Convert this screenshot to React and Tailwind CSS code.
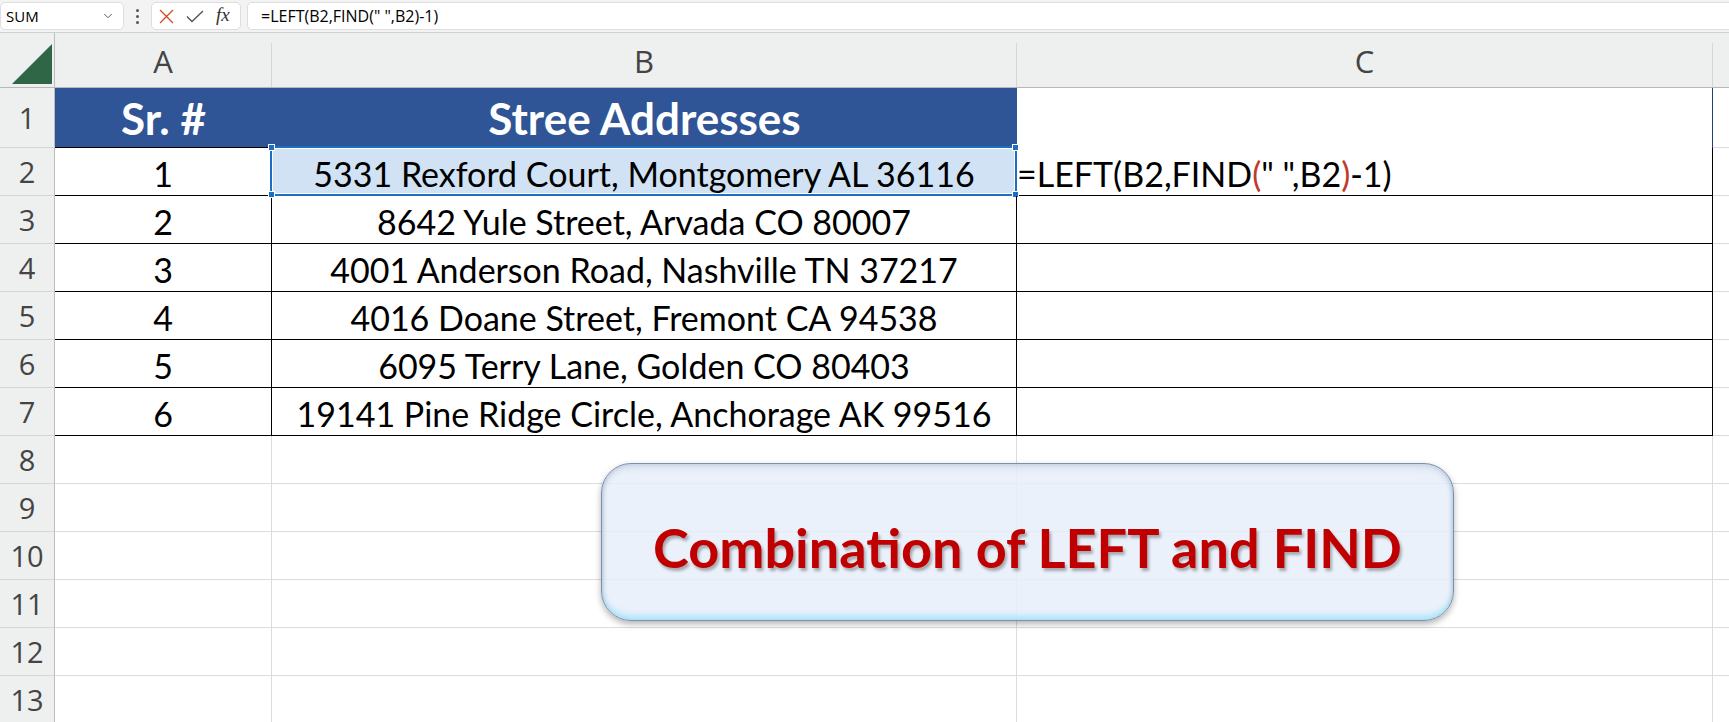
import { ChevronDown } from "lucide-react";

// Excel sheet: LEFT + FIND example
const addresses = [
  ["1", "5331 Rexford Court, Montgomery AL 36116"],
  ["2", "8642 Yule Street, Arvada CO 80007"],
  ["3", "4001 Anderson Road, Nashville TN 37217"],
  ["4", "4016 Doane Street, Fremont CA 94538"],
  ["5", "6095 Terry Lane, Golden CO 80403"],
  ["6", "19141 Pine Ridge Circle, Anchorage AK 99516"],
];

const cellFont = { fontFamily: "Lato, 'Liberation Sans', sans-serif" };
const uiFont = { fontFamily: "'Open Sans', 'Noto Sans', sans-serif" };

function RowHead({ n, h }) {
  return (
    <div
      className={`${h} w-[55px] shrink-0 box-border border-r border-b border-r-[#bdbdbd] border-b-[#d6d6d6] bg-[#eeefef] flex items-center justify-center text-[29px] text-[#444]`}
      style={uiFont}
    >
      {n}
    </div>
  );
}

function Handle({ pos }) {
  return <div className={`absolute ${pos} h-[7px] w-[7px] bg-[#1d6fc3] border border-white`} />;
}

function FormulaBar() {
  return (
    <div className="h-[33px] bg-[#f3f3f3] flex items-center border-b border-[#d0d0d0] box-border" style={uiFont}>
      <div className="h-[28px] w-[124px] bg-white rounded-[5px] border border-[#dedede] flex items-center justify-between pl-[5px] pr-[8px] text-[15px] text-black">
        <span>SUM</span>
        <ChevronDown size={14} strokeWidth={1.5} className="text-[#444]" />
      </div>
      <div className="w-[27px] flex flex-col items-center gap-[3px]">
        <span className="h-[3px] w-[3px] rounded-full bg-[#555]" />
        <span className="h-[3px] w-[3px] rounded-full bg-[#555]" />
        <span className="h-[3px] w-[3px] rounded-full bg-[#555]" />
      </div>
      <div className="h-[28px] w-[90px] bg-white rounded-[5px] border border-[#dedede] flex items-center pl-[7px] gap-[12px]">
        <svg width="15" height="15" viewBox="0 0 15 15">
          <path d="M1 1 L14 14 M14 1 L1 14" stroke="#d04a24" strokeWidth="1.3" fill="none" />
        </svg>
        <svg width="18" height="13" viewBox="0 0 18 13">
          <path d="M1 6.5 L6 11.5 L17 1" stroke="#555" strokeWidth="1.4" fill="none" />
        </svg>
        <span
          className="italic text-[19px] text-[#333] leading-none -mt-[3px]"
          style={{ fontFamily: "'Liberation Serif', serif" }}
        >
          fx
        </span>
      </div>
      <div className="ml-[6px] h-[28px] flex-1 bg-white rounded-l-[5px] border border-r-0 border-[#dedede] flex items-center pl-[13px] text-[16px] text-black">
        =LEFT(B2,FIND(" ",B2)-1)
      </div>
    </div>
  );
}

function ColumnHeader() {
  const cols = [
    ["A", "w-[217px]"],
    ["B", "w-[745px]"],
    ["C", "w-[696px]"],
  ];
  return (
    <div className="h-[55px] flex bg-[#eeefef] border-b border-[#b8b8b8] box-border" style={uiFont}>
      <div className="w-[55px] shrink-0 relative border-r border-[#bdbdbd] box-border">
        <svg className="absolute left-[12px] top-[11px]" width="41" height="40" viewBox="0 0 41 40">
          <path d="M0 40 L40 0 L40 40 Z" fill="#2e6646" />
        </svg>
      </div>
      {cols.map(([l, w]) => (
        <div key={l} className={`${w} shrink-0 flex`}>
          <div className="flex-1 flex items-center justify-center text-[31px] text-[#444] pt-[2px]">{l}</div>
          <div className="w-px h-[44px] self-end bg-[#d6d6d6]" />
        </div>
      ))}
      <div className="flex-1" />
    </div>
  );
}

export default function App() {
  const emptyRows = ["8", "9", "10", "11", "12", "13"];

  return (
    <div className="w-[1729px] h-[722px] overflow-hidden bg-white relative">
      <FormulaBar />
      <ColumnHeader />

      {/* Row 1: table headings */}
      <div className="flex h-[60px]">
        <RowHead n="1" h="h-[60px]" />
        <div
          className="w-[217px] shrink-0 box-border bg-[#2f5597] border-b border-black flex items-center justify-center text-white font-bold text-[44px]"
          style={cellFont}
        >
          Sr. #
        </div>
        <div
          className="w-[745px] shrink-0 box-border bg-[#2f5597] border-b border-black flex items-center justify-center text-white font-bold text-[44px]"
          style={cellFont}
        >
          Stree Addresses
        </div>
        <div className="w-[696px] shrink-0 box-border border-r border-[#223f78]" />
        <div className="flex-1 box-border border-b border-[#dcdcdc]" />
      </div>

      {/* Rows 2-7: data */}
      {addresses.map(([n, addr], i) => (
        <div key={n} className="flex h-[48px]">
          <RowHead n={String(i + 2)} h="h-[48px]" />
          <div
            className="w-[217px] shrink-0 box-border border-r border-b border-black flex items-center justify-center text-black text-[34px] pt-[4px]"
            style={cellFont}
          >
            {n}
          </div>
          <div
            className="w-[745px] shrink-0 box-border border-r border-b border-black relative flex items-center justify-center text-black text-[34px] pt-[4px]"
            style={cellFont}
          >
            {i === 0 && (
              <div className="absolute -top-[2px] -left-[2px] -right-[1px] -bottom-[1px] border-2 border-[#1d6fc3] bg-[#d0e2f4] shadow-[inset_0_0_0_1px_white]">
                <Handle pos="-top-[4px] -left-[4px]" />
                <Handle pos="-bottom-[4px] -left-[4px]" />
                <Handle pos="-top-[4px] -right-[4px]" />
                <Handle pos="-bottom-[4px] -right-[4px]" />
              </div>
            )}
            <span className="relative">{addr}</span>
          </div>
          <div
            className="w-[696px] shrink-0 box-border border-r border-b border-black flex items-center text-black text-[34px] pt-[4px]"
            style={cellFont}
          >
            {i === 0 && (
              <span>
                =LEFT(B2,FIND<span className="text-[#c0392b]">(</span>" ",B2
                <span className="text-[#c0392b]">)</span>-1)
              </span>
            )}
          </div>
          <div className="flex-1 box-border border-b border-[#dcdcdc]" />
        </div>
      ))}

      {/* Rows 8-13: empty grid */}
      {emptyRows.map((n) => (
        <div key={n} className="flex h-[48px]">
          <RowHead n={n} h="h-[48px]" />
          <div className="w-[217px] shrink-0 box-border border-r border-b border-[#dcdcdc]" />
          <div className="w-[745px] shrink-0 box-border border-r border-b border-[#dcdcdc]" />
          <div className="w-[696px] shrink-0 box-border border-r border-b border-[#dcdcdc]" />
          <div className="flex-1 box-border border-b border-[#dcdcdc]" />
        </div>
      ))}

      {/* Floating shape over the sheet */}
      <div className="absolute left-[601px] top-[463px] w-[853px] h-[158px] rounded-[30px] border border-[#7d8fae] bg-[#e7eef9]/85 shadow-[inset_0_-7px_7px_-3px_#a6e3fb,inset_0_6px_8px_-4px_#c3cfe2,inset_3px_0_5px_-3px_#9aa8c0,inset_-3px_0_5px_-3px_#9aa8c0,0_3px_6px_rgba(0,0,0,0.3)] flex items-center justify-center">
        <span
          className="text-[#c00000] font-bold text-[54px] pt-[10px] [text-shadow:2px_3px_3px_rgba(0,0,0,0.3)]"
          style={cellFont}
        >
          Combination of LEFT and FIND
        </span>
      </div>
    </div>
  );
}
